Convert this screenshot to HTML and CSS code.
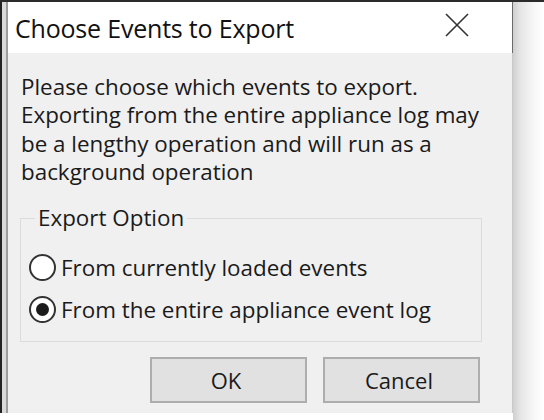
FILE: index.html
```html
<!DOCTYPE html>
<html>
<head>
<meta charset="utf-8">
<link rel="stylesheet" href="styles.css">
</head>
<body>
<div class="screen">
  <div class="left-edge"></div>
  <div class="dialog">
    <div class="titlebar">
      <span class="title">Choose Events to Export</span>
      <svg class="close" width="24" height="24" viewBox="0 0 24 24"><path d="M1 1 L23 23 M23 1 L1 23" stroke="#333" stroke-width="1.6" fill="none"/></svg>
    </div>
    <div class="content">
      <p class="msg">Please choose which events to export.<br>Exporting from the entire appliance log may<br>be a lengthy operation and will run as a<br>background operation</p>
      <fieldset class="group">
        <legend>Export Option</legend>
        <label class="radio"><span class="dot"></span>From currently loaded events</label>
        <label class="radio checked"><span class="dot"></span>From the entire appliance event log</label>
      </fieldset>
      <div class="buttons">
        <button class="btn">OK</button>
        <button class="btn">Cancel</button>
      </div>
    </div>
  </div>
  <div class="shadow"></div>
</div>
</body>
</html>
```

FILE: styles.css
```css
html, body { margin: 0; padding: 0; background: #fff; }
body { font-family: "Open Sans", "Noto Sans", sans-serif; color: #1a1a1a; }
.screen {
  width: 544px; height: 420px;
  border-top: 2px solid #2b2b2b;
  box-sizing: border-box;
  display: flex;
}
.left-edge {
  width: 4px; height: 411px;
  border-left: 2px solid #222;
  background: #d9d9d9;
}
.dialog {
  width: 507px; height: 411px;
  border-left: 2px solid #9c9c9c;
  box-sizing: border-box;
  display: flex; flex-direction: column;
}
.titlebar {
  height: 51px; background: #fff;
  border-right: 1px solid #6a6a6a;
  display: flex; align-items: center; justify-content: space-between;
  padding: 0 43px 0 7px;
}
.title { font-size: 25px; color: #111; letter-spacing: -0.2px; }
.close { display: block; margin-top: -6px; }
.content {
  flex: 1; background: #f0f0f0;
  border-right: 1px solid #c9c9c9;
  padding: 20px 30px 0 13px;
  display: flex; flex-direction: column;
}
.msg {
  margin: 0; font-size: 22.4px; line-height: 28.3px; color: #1a1a1a;
}
.group {
  margin: 18px 0 0 -1px;
  padding: 14px 0 11px 8px;
  border: 1px solid #dcdcdc;
}
.group legend {
  font-size: 22.4px; line-height: 28px; padding: 0 3px; margin-left: 6px; color: #1a1a1a;
}
.radio {
  display: flex; align-items: center;
  font-size: 22.4px; color: #1a1a1a;
  height: 42px;
}
.dot {
  width: 23px; height: 23px; border-radius: 50%;
  border: 2px solid #333; background: #fff;
  margin-right: 5px; position: relative; flex: none;
}
.checked .dot::after {
  content: ""; position: absolute; left: 5px; top: 5px;
  width: 13px; height: 13px; border-radius: 50%; background: #1b1b1b;
}
.buttons {
  display: flex; justify-content: flex-end; gap: 16px;
  margin-top: 15px; padding-right: 2px;
}
.btn {
  width: 157px; height: 46px;
  background: #e1e1e1; border: 2px solid #adadad;
  font-family: inherit; font-size: 22px; color: #1a1a1a;
  padding: 0 5px 0 0;
}
.shadow {
  flex: 1; height: 418px;
  background: linear-gradient(to right, #cfcfcf, #e6e6e6 25%, #f8f8f8 70%, #fff);
}
```
